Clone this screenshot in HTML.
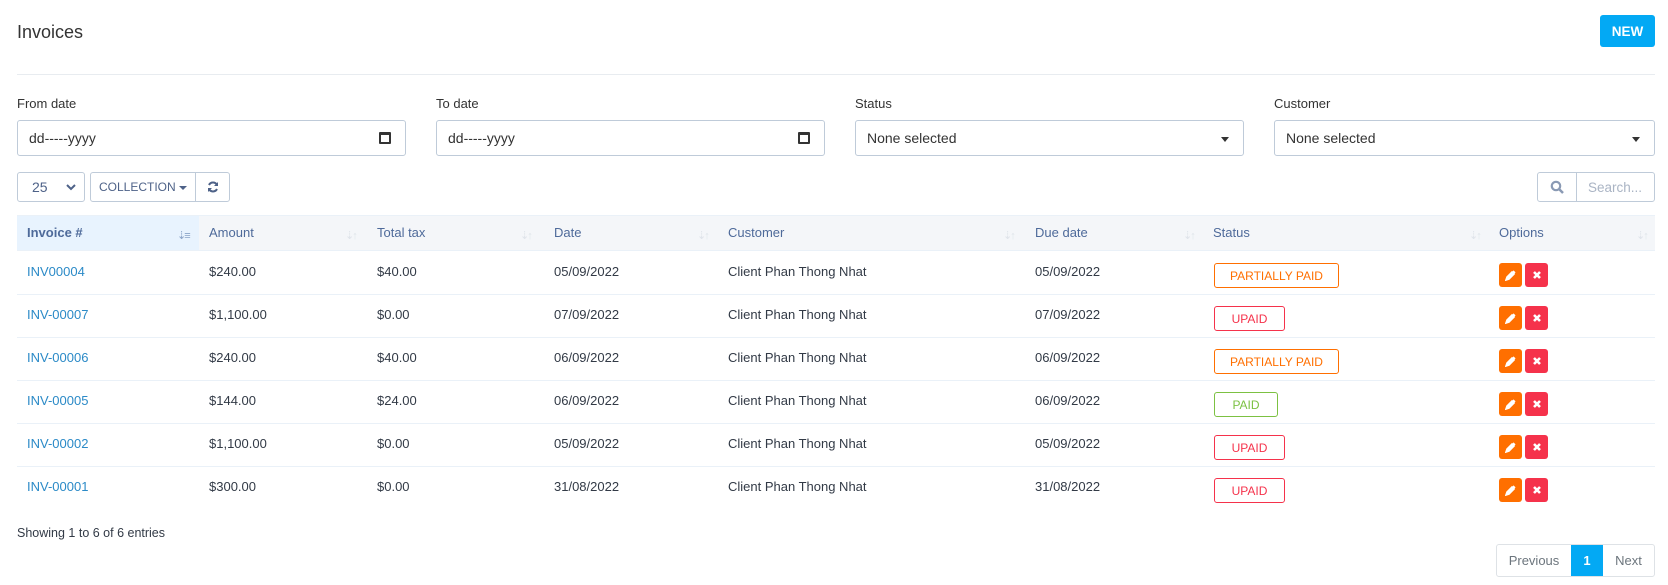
<!DOCTYPE html>
<html><head><meta charset="utf-8"><style>
*{box-sizing:border-box;margin:0;padding:0}
body{width:1668px;height:585px;background:#fff;font-family:"Liberation Sans",sans-serif;color:#323a46;position:relative;overflow:hidden;font-size:13.5px}
.a{position:absolute}
.title{left:17px;top:22px;font-size:18px;color:#333}
.new{left:1600px;top:15px;width:55px;height:32px;background:#03a9f4;color:#fff;border-radius:3px;font-weight:bold;font-size:13.5px;display:flex;align-items:center;justify-content:center}
.hr{left:17px;top:74px;width:1638px;height:1px;background:#e8ecf0}
.lbl{top:96px;font-size:13px;color:#333}
.inp{top:120px;height:36px;width:389px;border:1px solid #bfcbd9;border-radius:3px;display:flex;align-items:center;padding-left:11px;font-size:14px;color:#333}
.cal{position:absolute;right:14px;top:11px;width:12px;height:12px;border:2px solid #333;border-top-width:3px;border-radius:1px}
.caret{position:absolute;right:14px;top:16px;width:0;height:0;border-left:4px solid transparent;border-right:4px solid transparent;border-top:5px solid #333}
.tb{top:172px;height:30px;border:1px solid #bfcbd9;border-radius:3px;display:flex;align-items:center;color:#4e6288}
.thead{left:17px;top:215px;width:1638px;height:36px;background:#f4f6f9;border-top:1px solid #eaf1f8;border-bottom:1px solid #eaf1f8}
.th{top:215px;height:36px;line-height:36px;color:#4e6a9a;font-size:13px}
.sort{top:229px;font-size:11px;color:#dfe4ea;letter-spacing:-2px}
.row{left:17px;width:1638px;height:1px;background:#eaf1f8}
.td{font-size:13px;color:#323a46}
.lnk{color:#2b8ac7}
.badge{height:25px;border:1px solid;border-radius:3px;font-size:12px;display:flex;align-items:center;justify-content:center}
.pp{width:125px;color:#ff6f00;border-color:#ff6f00}
.up{width:71px;color:#f5324b;border-color:#f5324b}
.pd{width:64px;color:#7cc142;border-color:#7cc142}
.btn{width:23px;height:24px;border-radius:3px;display:flex;align-items:center;justify-content:center;color:#fff;font-weight:bold;font-size:13px}
.ed{background:#ff6f00}.dl{background:#f5324b}
</style></head><body>
<div class="a title">Invoices</div>
<div class="a new">NEW</div>
<div class="a hr"></div>
<div class="a lbl" style="left:17px">From date</div>
<div class="a lbl" style="left:436px">To date</div>
<div class="a lbl" style="left:855px">Status</div>
<div class="a lbl" style="left:1274px">Customer</div>
<div class="a inp" style="left:17px">dd-----yyyy<span class="cal"></span></div>
<div class="a inp" style="left:436px">dd-----yyyy<span class="cal"></span></div>
<div class="a inp" style="left:855px">None selected<span class="caret"></span></div>
<div class="a inp" style="left:1274px;width:381px">None selected<span class="caret"></span></div>

<div class="a tb" style="left:17px;width:68px;padding-left:14px;font-size:14px">25<svg style="position:absolute;right:8px;top:11px" width="10" height="7" viewBox="0 0 10 7"><path d="M1 1l4 4 4-4" stroke="#4e6288" stroke-width="2" fill="none"/></svg></div>
<div class="a tb" style="left:90px;width:140px;border-radius:3px"><span style="width:105px;text-align:center;font-size:12px;border-right:1px solid #bfcbd9;line-height:28px">COLLECTION <span style="display:inline-block;border-left:4px solid transparent;border-right:4px solid transparent;border-top:4px solid #4e6288;vertical-align:middle"></span></span><svg style="margin-left:11px" width="12" height="12" viewBox="0 0 12 12"><path d="M10 4A4.5 4.5 0 0 0 2 4M2 8a4.5 4.5 0 0 0 8 0" stroke="#4e6288" stroke-width="2" fill="none"/><path d="M11 1v4H7zM1 11V7h4z" fill="#4e6288"/></svg></div>
<div class="a tb" style="left:1537px;width:118px;color:#aab4c4;font-size:13.5px"><span style="width:39px;height:28px;border-right:1px solid #bfcbd9;display:flex;align-items:center;justify-content:center"><svg width="14" height="14" viewBox="0 0 14 14"><circle cx="6" cy="6" r="4.2" stroke="#8a9ab4" stroke-width="2.2" fill="none"/><path d="M9 9l4 4" stroke="#8a9ab4" stroke-width="2.5"/></svg></span><span style="padding-left:11px">Search...</span></div>

<div class="a thead"></div>
<div class="a" style="left:17px;top:216px;width:182px;height:34px;background:#e8f3fe"></div>
<div class="a th" style="left:27px;font-weight:bold">Invoice #</div>
<div class="a th" style="left:209px">Amount</div>
<div class="a th" style="left:377px">Total tax</div>
<div class="a th" style="left:554px">Date</div>
<div class="a th" style="left:728px">Customer</div>
<div class="a th" style="left:1035px">Due date</div>
<div class="a th" style="left:1213px">Status</div>
<div class="a th" style="left:1499px">Options</div>
<div class="a sort" style="left:177px;color:#8aa3c7">⇣≡</div>
<div class="a sort" style="left:345px">⇣↑</div>
<div class="a sort" style="left:520px">⇣↑</div>
<div class="a sort" style="left:697px">⇣↑</div>
<div class="a sort" style="left:1003px">⇣↑</div>
<div class="a sort" style="left:1183px">⇣↑</div>
<div class="a sort" style="left:1469px">⇣↑</div>
<div class="a sort" style="left:1636px">⇣↑</div>

<div id="rows"></div>
<div class="a td" style="left:17px;top:526px;font-size:12.5px">Showing 1 to 6 of 6 entries</div>
<div class="a" style="left:1496px;top:544px;width:159px;height:33px;border:1px solid #dee2e6;border-radius:3px;display:flex;font-size:13px;color:#6c757d;overflow:hidden">
<span style="width:74px;display:flex;align-items:center;justify-content:center">Previous</span>
<span style="width:32px;background:#03a9f4;color:#fff;display:flex;align-items:center;justify-content:center;font-weight:bold">1</span>
<span style="flex:1;display:flex;align-items:center;justify-content:center">Next</span></div>

<script>
var d=[["INV00004","$240.00","$40.00","05/09/2022","05/09/2022","pp","PARTIALLY PAID"],
["INV-00007","$1,100.00","$0.00","07/09/2022","07/09/2022","up","UPAID"],
["INV-00006","$240.00","$40.00","06/09/2022","06/09/2022","pp","PARTIALLY PAID"],
["INV-00005","$144.00","$24.00","06/09/2022","06/09/2022","pd","PAID"],
["INV-00002","$1,100.00","$0.00","05/09/2022","05/09/2022","up","UPAID"],
["INV-00001","$300.00","$0.00","31/08/2022","31/08/2022","up","UPAID"]];
var h="";
d.forEach(function(r,i){var t=251+i*43;var y=t+13;
if(i>0)h+='<div class="a row" style="top:'+t+'px"></div>';
h+='<div class="a td lnk" style="left:27px;top:'+y+'px">'+r[0]+'</div>';
h+='<div class="a td" style="left:209px;top:'+y+'px">'+r[1]+'</div>';
h+='<div class="a td" style="left:377px;top:'+y+'px">'+r[2]+'</div>';
h+='<div class="a td" style="left:554px;top:'+y+'px">'+r[3]+'</div>';
h+='<div class="a td" style="left:728px;top:'+y+'px">Client Phan Thong Nhat</div>';
h+='<div class="a td" style="left:1035px;top:'+y+'px">'+r[4]+'</div>';
h+='<div class="a badge '+r[5]+'" style="left:1214px;top:'+(t+12)+'px">'+r[6]+'</div>';
h+='<div class="a btn ed" style="left:1499px;top:'+(t+12)+'px"><svg width="11" height="11" viewBox="0 0 11 11"><path d="M1 10l1-3 5-5 2 2-5 5z M8 1l2 2" stroke="#fff" stroke-width="1.6" fill="#fff"/></svg></div>';
h+='<div class="a btn dl" style="left:1525px;top:'+(t+12)+'px"><svg width="10" height="10" viewBox="0 0 10 10"><path d="M2 2l6 6M8 2l-6 6" stroke="#fff" stroke-width="2.6"/></svg></div>';
});
document.getElementById("rows").innerHTML=h;
</script>
</body></html>
